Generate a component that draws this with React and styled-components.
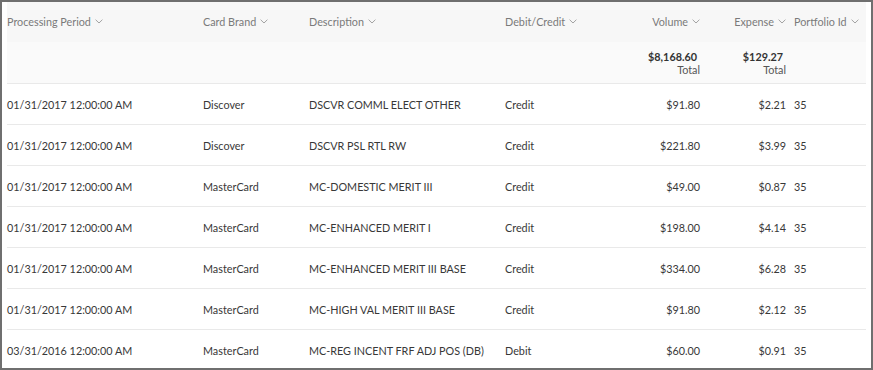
import React from 'react';
import styled, { createGlobalStyle } from 'styled-components';

const GlobalStyle = createGlobalStyle`
	html, body {
		margin: 0;
		padding: 0;
		background: #fff;
	}
	body {
		font-family: Lato, 'Noto Sans', sans-serif;
	}
`;

const rows = [
	['01/31/2017 12:00:00 AM', 'Discover', 'DSCVR COMML ELECT OTHER', 'Credit', '$91.80', '$2.21', '35'],
	['01/31/2017 12:00:00 AM', 'Discover', 'DSCVR PSL RTL RW', 'Credit', '$221.80', '$3.99', '35'],
	['01/31/2017 12:00:00 AM', 'MasterCard', 'MC-DOMESTIC MERIT III', 'Credit', '$49.00', '$0.87', '35'],
	['01/31/2017 12:00:00 AM', 'MasterCard', 'MC-ENHANCED MERIT I', 'Credit', '$198.00', '$4.14', '35'],
	['01/31/2017 12:00:00 AM', 'MasterCard', 'MC-ENHANCED MERIT III BASE', 'Credit', '$334.00', '$6.28', '35'],
	['01/31/2017 12:00:00 AM', 'MasterCard', 'MC-HIGH VAL MERIT III BASE', 'Credit', '$91.80', '$2.12', '35'],
	['03/31/2016 12:00:00 AM', 'MasterCard', 'MC-REG INCENT FRF ADJ POS (DB)', 'Debit', '$60.00', '$0.91', '35'],
];

const columns = [
	{ label: 'Processing Period' },
	{ label: 'Card Brand' },
	{ label: 'Description' },
	{ label: 'Debit/Credit' },
	{ label: 'Volume', right: true },
	{ label: 'Expense', right: true },
	{ label: 'Portfolio Id' },
];

const Chevron = () => (
	<svg width='8' height='5' viewBox='0 0 8 5' fill='none'>
		<path d='M0.6 0.7 L4 4 L7.4 0.7' stroke='#9a9a9a' strokeWidth='0.9' />
	</svg>
);

const App = () => {
	return (
		<React.Fragment>
			<GlobalStyle />
			<Frame>
				<Table>
					<HeadRow>
						{columns.map((c) => (
							<HeadCell key={c.label} $right={c.right}>
								{c.label}
								<Chevron />
							</HeadCell>
						))}
					</HeadRow>
					<TotalsRow>
						<Cell />
						<Cell />
						<Cell />
						<Cell />
						<Cell $right>
							<TotalBox>
								<Amount>$8,168.60</Amount>
								<TotalLabel>Total</TotalLabel>
							</TotalBox>
						</Cell>
						<Cell $right>
							<TotalBox>
								<Amount>$129.27</Amount>
								<TotalLabel>Total</TotalLabel>
							</TotalBox>
						</Cell>
						<Cell />
					</TotalsRow>
					{rows.map((r, i) => (
						<Row key={i}>
							{r.map((v, j) => (
								<Cell key={j} $right={columns[j].right}>
									{v}
								</Cell>
							))}
						</Row>
					))}
				</Table>
			</Frame>
		</React.Fragment>
	);
};

export default App;

const Frame = styled.div`
	width: 873px;
	height: 370px;
	box-sizing: border-box;
	border: 2px solid #6f6f6f;
	padding: 0 5px;
	overflow: hidden;
	background: #fff;
`;

const Table = styled.div`
	display: flex;
	flex-direction: column;
`;

const Row = styled.div`
	display: grid;
	grid-template-columns: 196px 106px 196px 120px 83px 86px 1fr;
	height: 41px;
	box-sizing: border-box;
	border-bottom: 1px solid #e9e9e9;
	align-items: center;
	font-size: 10.8px;
	color: #383838;
`;

const HeadRow = styled(Row)`
	height: 40px;
	padding-bottom: 2px;
	border-bottom: none;
	background: #f7f7f7;
	color: #7a7a7a;
`;

const TotalsRow = styled(Row)`
	height: 42px;
	background: #fafafa;
`;

const Cell = styled.div`
	display: flex;
	justify-content: ${(p) => (p.$right ? 'flex-end' : 'flex-start')};
	padding-right: 8px;
	white-space: nowrap;
`;

const HeadCell = styled(Cell)`
	align-items: center;
	gap: 4px;
	svg {
		margin-top: 1px;
	}
`;

const TotalBox = styled.div`
	display: flex;
	flex-direction: column;
	align-items: flex-end;
	line-height: 13px;
`;

const Amount = styled.span`
	font-weight: 700;
	color: #333;
	padding-right: 3px;
`;

const TotalLabel = styled.span`
	color: #555;
`;
